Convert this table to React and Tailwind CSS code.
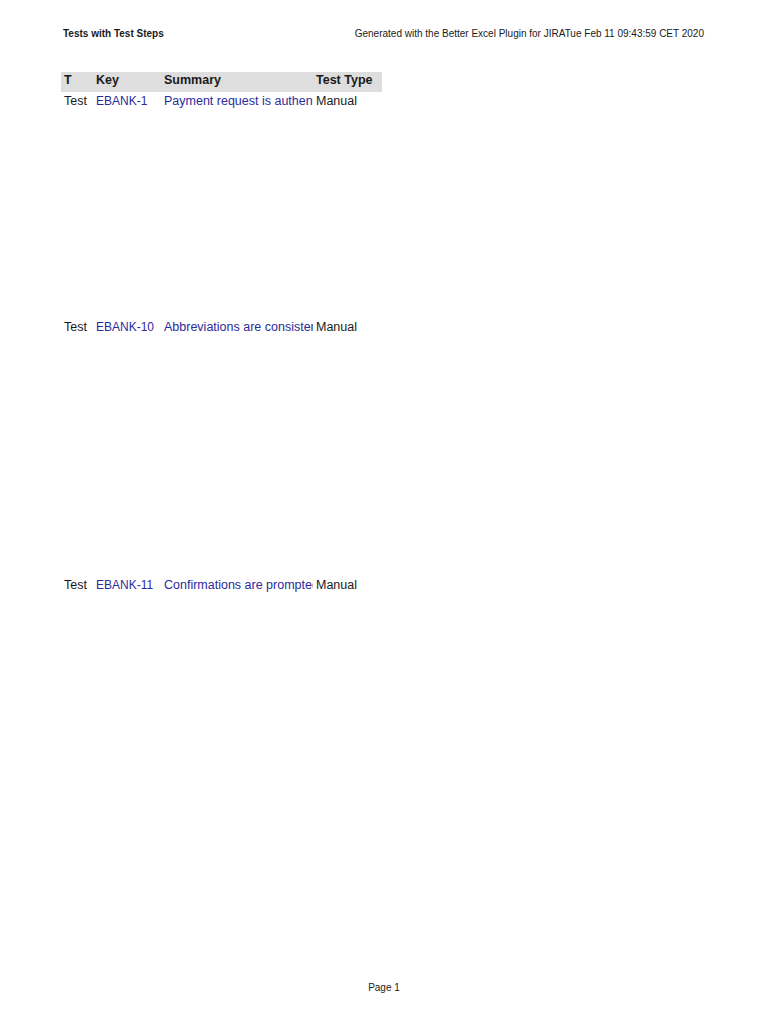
export default function App() {
  const font = { fontFamily: '"Liberation Sans", Arial, sans-serif' };
  const rows = [
    { key: "EBANK-1", summary: "Payment request is authenticated", h: "h-[226px]" },
    { key: "EBANK-10", summary: "Abbreviations are consistent", h: "h-[258px]" },
    { key: "EBANK-11", summary: "Confirmations are prompted", h: "h-[60px]" },
  ];
  return (
    <div className="h-[1024px] w-[768px] bg-white flex flex-col text-[#1a1a1a]" style={font}>
      <div className="flex justify-between pl-[63px] pr-[64px] pt-[28px] text-[10px] leading-[12px]">
        <span className="font-bold">Tests with Test Steps</span>
        <span>Generated with the Better Excel Plugin for JIRATue Feb 11 09:43:59 CET 2020</span>
      </div>
      <div className="ml-[61px] mt-[32px] w-[321px] text-[12.5px] leading-[16px]">
        <div className="flex h-[20px] items-start bg-[#dedede] font-bold">
          <div className="w-[32px] pl-[3px]">T</div>
          <div className="w-[68px] pl-[3px]">Key</div>
          <div className="w-[152px] pl-[3px]">Summary</div>
          <div className="w-[69px] pl-[3px] whitespace-nowrap">Test Type</div>
        </div>
        {rows.map((r) => (
          <div key={r.key} className={`flex ${r.h} items-start pt-[1px]`}>
            <div className="w-[32px] pl-[3px]">Test</div>
            <div className="w-[68px] pl-[3px] text-[12px] text-[#2b2b9a]">{r.key}</div>
            <div className="w-[152px] pl-[3px] text-[#2b2b9a] whitespace-nowrap overflow-hidden">{r.summary}</div>
            <div className="w-[69px] pl-[3px]">Manual</div>
          </div>
        ))}
      </div>
      <div className="mt-auto pb-[31px] text-center text-[10px] leading-[11px]">Page 1</div>
    </div>
  );
}
